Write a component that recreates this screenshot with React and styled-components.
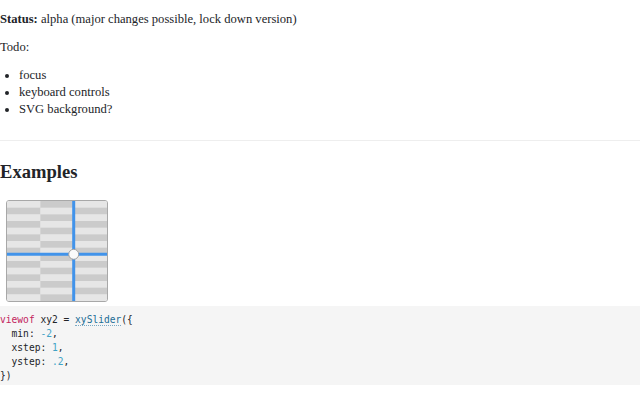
import React from "react";
import styled, { createGlobalStyle } from "styled-components";

const Global = createGlobalStyle`
  html, body { margin: 0; padding: 0; background: #fff; }
  body {
    font-family: "Liberation Serif", "Times New Roman", serif;
    color: #222428;
    -webkit-font-smoothing: antialiased;
  }
`;

const Page = styled.div`
  display: flex;
  flex-direction: column;
  font-size: 12.6px;
  line-height: 17px;
`;

const P = styled.p`
  margin: ${(p) => p.$mt || 0}px 0 0 0;
`;

const List = styled.ul`
  margin: 11px 0 0 0;
  padding-left: 19px;
  list-style: disc;
`;

const Rule = styled.hr`
  margin: 22px 0 0 0;
  border: none;
  border-top: 1px solid #eeeeee;
  height: 0;
`;

const H2 = styled.h2`
  margin: 19px 0 0 0;
  font-size: 18.6px;
  line-height: 24px;
  font-weight: 700;
`;

const SliderBox = styled.div`
  margin: 16px 0 0 6px;
  width: 100px;
  height: 100px;
  border: 1px solid #a8a8a8;
  border-radius: 3px;
  overflow: hidden;
  svg { display: block; }
`;

const Code = styled.pre`
  margin: 4px 0 0 0;
  padding: 7px 0 2px 0;
  background: #f5f5f5;
  font-family: "DejaVu Sans Mono", "Liberation Mono", monospace;
  font-size: 9.6px;
  line-height: 14px;
  color: #222428;
`;

const Kw = styled.span`
  color: #c3245d;
`;
const Ref = styled.span`
  color: #1b6d96;
  border-bottom: 1px dotted #7aa9c4;
`;
const Num = styled.span`
  color: #3fa3c6;
`;

function Slider() {
  const cols = 3;
  const rows = 15;
  const cw = 100 / cols;
  const rh = 100 / rows;
  const cells = [];
  for (let i = 0; i < cols; i++) {
    for (let j = 0; j < rows; j++) {
      cells.push(
        <rect
          key={i + "-" + j}
          x={i * cw}
          y={j * rh}
          width={cw + 0.5}
          height={rh + 0.5}
          fill={(i + j) % 2 === 0 ? "#e6e6e6" : "#cbcbcb"}
        />
      );
    }
  }
  const hx = 66.7;
  const hy = 53.3;
  return (
    <SliderBox>
      <svg width="100" height="100" viewBox="0 0 100 100">
        {cells}
        <line x1={hx} y1="0" x2={hx} y2="100" stroke="#4193ea" strokeWidth="3" />
        <line x1="0" y1={hy} x2="100" y2={hy} stroke="#4193ea" strokeWidth="3" />
        <circle cx={hx} cy={hy} r="5" fill="#fafafa" stroke="#a0a0a0" strokeWidth="1" />
      </svg>
    </SliderBox>
  );
}

export default function App() {
  return (
    <Page>
      <Global />
      <P $mt={11}>
        <b>Status:</b> alpha (major changes possible, lock down version)
      </P>
      <P $mt={11}>Todo:</P>
      <List>
        <li>focus</li>
        <li>keyboard controls</li>
        <li>SVG background?</li>
      </List>
      <Rule />
      <H2>Examples</H2>
      <Slider />
      <Code>
        <Kw>viewof</Kw> xy2 = <Ref>xySlider</Ref>{"({"}{"\n"}
        {"  "}min: <Num>-2</Num>,{"\n"}
        {"  "}xstep: <Num>1</Num>,{"\n"}
        {"  "}ystep: <Num>.2</Num>,{"\n"}
        {"})"}
      </Code>
    </Page>
  );
}
